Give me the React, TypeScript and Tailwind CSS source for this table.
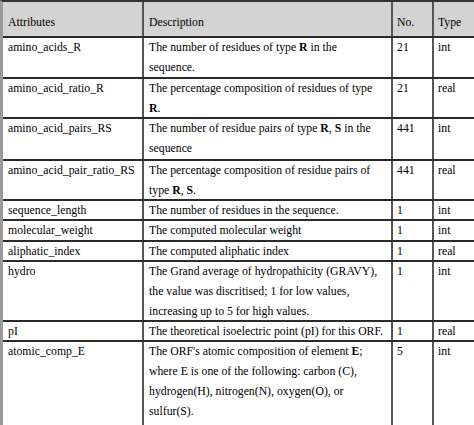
import React from 'react';

interface Row {
  attr: string;
  desc: React.ReactNode;
  no: string;
  type: string;
  h: string;
}

const ROWS: Row[] = [
  {
    attr: 'amino_acids_R',
    desc: (
      <>
        The number of residues of type <b>R</b> in the
        <br />
        sequence.
      </>
    ),
    no: '21',
    type: 'int',
    h: 'h-[41px]',
  },
  {
    attr: 'amino_acid_ratio_R',
    desc: (
      <>
        The percentage composition of residues of type
        <br />
        <b>R</b>.
      </>
    ),
    no: '21',
    type: 'real',
    h: 'h-[40px]',
  },
  {
    attr: 'amino_acid_pairs_RS',
    desc: (
      <>
        The number of residue pairs of type <b>R</b>, <b>S</b> in the
        <br />
        sequence
      </>
    ),
    no: '441',
    type: 'int',
    h: 'h-[42px]',
  },
  {
    attr: 'amino_acid_pair_ratio_RS',
    desc: (
      <>
        The percentage composition of residue pairs of
        <br />
        type <b>R</b>, <b>S</b>.
      </>
    ),
    no: '441',
    type: 'real',
    h: 'h-[40px]',
  },
  { attr: 'sequence_length', desc: 'The number of residues in the sequence.', no: '1', type: 'int', h: 'h-[20px]' },
  { attr: 'molecular_weight', desc: 'The computed molecular weight', no: '1', type: 'int', h: 'h-[21px]' },
  { attr: 'aliphatic_index', desc: 'The computed aliphatic index', no: '1', type: 'real', h: 'h-[20px]' },
  {
    attr: 'hydro',
    desc: (
      <>
        The Grand average of hydropathicity (GRAVY),
        <br />
        the value was discritised; 1 for low values,
        <br />
        increasing up to 5 for high values.
      </>
    ),
    no: '1',
    type: 'int',
    h: 'h-[60px]',
  },
  {
    attr: 'pI',
    desc: 'The theoretical isoelectric point (pI) for this ORF.',
    no: '1',
    type: 'real',
    h: 'h-[20px]',
  },
  {
    attr: 'atomic_comp_E',
    desc: (
      <>
        The ORF&apos;s atomic composition of element <b>E</b>;
        <br />
        where E is one of the following: carbon (C),
        <br />
        hydrogen(H), nitrogen(N), oxygen(O), or
        <br />
        sulfur(S).
      </>
    ),
    no: '5',
    type: 'int',
    h: 'h-[90px]',
  },
];

export default function App() {
  return (
    <div className="w-[474px] h-[425px] overflow-hidden bg-white">
      <div className="w-[480px] border-l-[3px] border-t-2 border-l-[#9a9a9a] border-t-[#333] font-['Liberation_Serif','Times_New_Roman',serif] text-[11.75px] leading-[20px] text-black">
        <div className="flex h-[36px] bg-[#d3d3d3] border-b-2 border-[#2a2a2a]">
          <div className="w-[139px] pl-[5px] pt-[11px]">Attributes</div>
          <div className="w-[249px] border-l-2 border-[#555] pl-[5px] pt-[11px]">Description</div>
          <div className="w-[41px] border-l-2 border-[#555] pl-[4px] pt-[11px]">No.</div>
          <div className="flex-1 border-l-2 border-[#555] pl-[4px] pt-[11px]">Type</div>
        </div>
        {ROWS.map((r) => (
          <div key={r.attr} className={`flex ${r.h} border-b-2 border-[#2a2a2a] last:border-b-0`}>
            <div className="w-[139px] pl-[5px]">{r.attr}</div>
            <div className="w-[249px] border-l-2 border-[#555] pl-[5px] whitespace-nowrap">{r.desc}</div>
            <div className="w-[41px] border-l-2 border-[#555] pl-[4px]">{r.no}</div>
            <div className="flex-1 border-l-2 border-[#555] pl-[4px]">{r.type}</div>
          </div>
        ))}
      </div>
    </div>
  );
}
